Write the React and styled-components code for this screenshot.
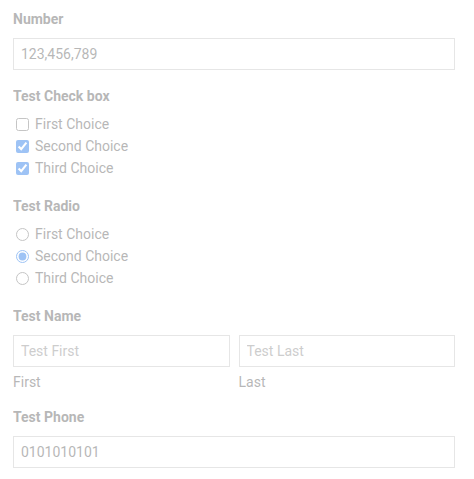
import React from 'react';
import styled, { createGlobalStyle } from 'styled-components';

const GlobalStyle = createGlobalStyle`
  body {
    margin: 0;
    background: #ffffff;
    font-family: Roboto, "Liberation Sans", sans-serif;
  }
`;

const Form = styled.form`
  display: flex;
  flex-direction: column;
  padding: 10px 19px 0 13px;
  opacity: 0.42;
`;

const Group = styled.div`
  display: flex;
  flex-direction: column;
  margin-bottom: ${(p) => p.$gap || 17}px;
`;

const Label = styled.div`
  font-size: 14px;
  font-weight: 700;
  color: #555;
  line-height: 18px;
  margin-bottom: 10px;
`;

const TextInput = styled.input`
  box-sizing: border-box;
  width: 100%;
  height: 32px;
  border: 1px solid #c4c4c4;
  border-radius: 0;
  padding: 0 7px;
  font-family: Roboto, "Liberation Sans", sans-serif;
  font-size: 14px;
  color: #555;
  background: #fff;
  &::placeholder {
    color: #8a8a8a;
  }
  &:disabled {
    background: #fff;
  }
`;

const Options = styled.div`
  display: flex;
  flex-direction: column;
  margin-top: -2px;
`;

const Option = styled.label`
  display: flex;
  align-items: center;
  height: 22px;
  font-size: 14px;
  color: #555;
  padding-left: 3px;
`;

const Box = styled.input`
  margin: 0 6px 0 0;
  width: 13px;
  height: 13px;
  accent-color: #1a73e8;
`;

const NameRow = styled.div`
  display: grid;
  grid-template-columns: 1fr 1fr;
  column-gap: 9px;
`;

const NameField = styled.div`
  display: flex;
  flex-direction: column;
`;

const SubLabel = styled.span`
  font-size: 14px;
  color: #555;
  margin-top: 7px;
  line-height: 16px;
`;

const choices = ['First Choice', 'Second Choice', 'Third Choice'];

const App = () => {
  return (
    <>
      <GlobalStyle />
      <Form>
        <Group>
          <Label>Number</Label>
          <TextInput disabled defaultValue="123,456,789" />
        </Group>
        <Group $gap={18}>
          <Label>Test Check box</Label>
          <Options>
            {choices.map((c, i) => (
              <Option key={c}>
                <Box type="checkbox" readOnly checked={i > 0} />
                {c}
              </Option>
            ))}
          </Options>
        </Group>
        <Group $gap={18}>
          <Label>Test Radio</Label>
          <Options>
            {choices.map((c, i) => (
              <Option key={c}>
                <Box type="radio" name="radio" readOnly checked={i === 1} />
                {c}
              </Option>
            ))}
          </Options>
        </Group>
        <Group $gap={18}>
          <Label>Test Name</Label>
          <NameRow>
            <NameField>
              <TextInput disabled placeholder="Test First" />
              <SubLabel>First</SubLabel>
            </NameField>
            <NameField>
              <TextInput disabled placeholder="Test Last" />
              <SubLabel>Last</SubLabel>
            </NameField>
          </NameRow>
        </Group>
        <Group>
          <Label>Test Phone</Label>
          <TextInput disabled defaultValue="0101010101" />
        </Group>
      </Form>
    </>
  );
};

export default App;
